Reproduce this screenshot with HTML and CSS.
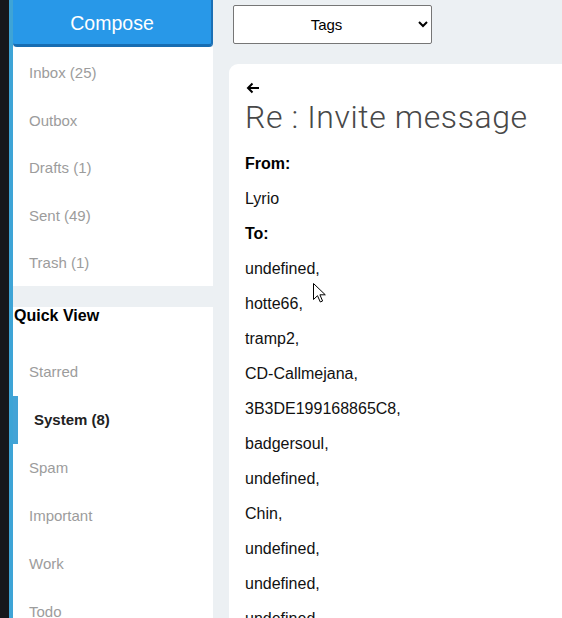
FILE: index.html
```html
<!DOCTYPE html>
<html>
<head>
<meta charset="utf-8">
<link rel="stylesheet" href="styles.css">
</head>
<body>
<div class="app">
  <div class="edge-dark"></div>
  <div class="edge-blue"></div>
  <aside class="sidebar">
    <button class="compose">Compose</button>
    <ul class="folders">
      <li>Inbox (25)</li>
      <li>Outbox</li>
      <li>Drafts (1)</li>
      <li>Sent (49)</li>
      <li>Trash (1)</li>
    </ul>
    <div class="quick">
      <h3 class="quick-title">Quick View</h3>
      <ul class="folders">
        <li>Starred</li>
        <li class="active">System (8)</li>
        <li>Spam</li>
        <li>Important</li>
        <li>Work</li>
        <li>Todo</li>
      </ul>
    </div>
  </aside>
  <main class="main">
    <div class="toolbar">
      <select class="tags"><option>Tags</option></select>
    </div>
    <section class="card">
      <svg class="back" width="14" height="12" viewBox="0 0 14 12"><path d="M13 6H2M6.5 1.5L2 6l4.5 4.5" fill="none" stroke="#000" stroke-width="2"/></svg>
      <h1 class="title">Re : Invite message</h1>
      <div class="line label">From:</div>
      <div class="line">Lyrio</div>
      <div class="line label">To:</div>
      <div class="line">undefined,</div>
      <div class="line">hotte66,</div>
      <div class="line">tramp2,</div>
      <div class="line">CD-Callmejana,</div>
      <div class="line">3B3DE199168865C8,</div>
      <div class="line">badgersoul,</div>
      <div class="line">undefined,</div>
      <div class="line">Chin,</div>
      <div class="line">undefined,</div>
      <div class="line">undefined,</div>
      <div class="line">undefined,</div>
    </section>
  </main>
</div>
<svg class="cursor" width="14" height="20" viewBox="0 0 14 20"><path d="M0.5 0.5V16.5L4.5 12.7L7.3 19L9.6 18L6.9 11.8H12.3Z" fill="#fff" stroke="#000" stroke-width="1"/></svg>
</body>
</html>
```
FILE: styles.css
```css
html, body {
  margin: 0;
  padding: 0;
  height: 100%;
  overflow: hidden;
  background: #ecf0f3;
  font-family: "Liberation Sans", Arial, sans-serif;
}
.app {
  display: flex;
  height: 618px;
  overflow: hidden;
}
.edge-dark {
  width: 9px;
  background: #16171c;
  flex: none;
}
.edge-blue {
  width: 4px;
  background: #3ea4d6;
  flex: none;
}
.sidebar {
  width: 200px;
  flex: none;
  display: flex;
  flex-direction: column;
  min-height: 0;
}
.compose {
  flex: none;
  height: 47px;
  width: 200px;
  border: none;
  border-bottom: 3px solid #176db2;
  border-right: 2px solid #1b70b5;
  border-radius: 0 0 4px 4px;
  background: #2898e8;
  color: #fff;
  font-family: "Liberation Sans", Arial, sans-serif;
  font-size: 19.5px;
  padding: 2px 0 0 0;
  box-sizing: border-box;
}
.folders {
  list-style: none;
  margin: 0;
  padding: 0;
  background: #fff;
}
.sidebar > .folders {
  flex: none;
  padding-top: 2px;
  height: 239px;
  box-sizing: border-box;
}
.folders li {
  height: 47.5px;
  line-height: 47.5px;
  padding-left: 16px;
  font-size: 15px;
  color: #9c9c9c;
  white-space: nowrap;
}
.quick {
  flex: 1;
  min-height: 0;
  overflow: hidden;
  margin-top: 21px;
  background: #fff;
}
.quick-title {
  margin: 0 0 23px 0;
  height: 18px;
  line-height: 18px;
  font-size: 16px;
  font-weight: bold;
  color: #000;
  padding-left: 1px;
}
.quick .folders li {
  height: 48px;
  line-height: 47px;
}
.quick .folders li.active {
  color: #222;
  font-weight: bold;
  padding-left: 16px;
  border-left: 5px solid #44a3d6;
}
.main {
  flex: 1;
  min-width: 0;
  display: flex;
  flex-direction: column;
}
.toolbar {
  flex: none;
  height: 64px;
  padding: 5px 0 0 20px;
  box-sizing: border-box;
}
.tags {
  width: 199px;
  height: 39px;
  border: 1px solid #767676;
  border-radius: 2px;
  background: #fff;
  font-family: "Liberation Sans", Arial, sans-serif;
  font-size: 15px;
  color: #000;
  text-align: center;
  text-align-last: center;
}
.card {
  margin-left: 16px;
  background: #fff;
  border-top-left-radius: 9px;
  flex: 1;
  min-height: 0;
  padding: 18px 0 0 16px;
  overflow: hidden;
}
.back {
  display: block;
  margin-left: 1px;
}
.title {
  margin: 4px 0 10px 0;
  font-family: Roboto, "Liberation Sans", sans-serif;
  font-weight: 300;
  font-size: 32px;
  letter-spacing: 0.6px;
  line-height: 38px;
  color: #484848;
  white-space: nowrap;
}
.line {
  height: 35px;
  line-height: 35px;
  font-size: 16px;
  color: #111;
  white-space: nowrap;
}
.label {
  font-weight: bold;
  color: #000;
}
.cursor {
  position: absolute;
  left: 313px;
  top: 283px;
}
```
